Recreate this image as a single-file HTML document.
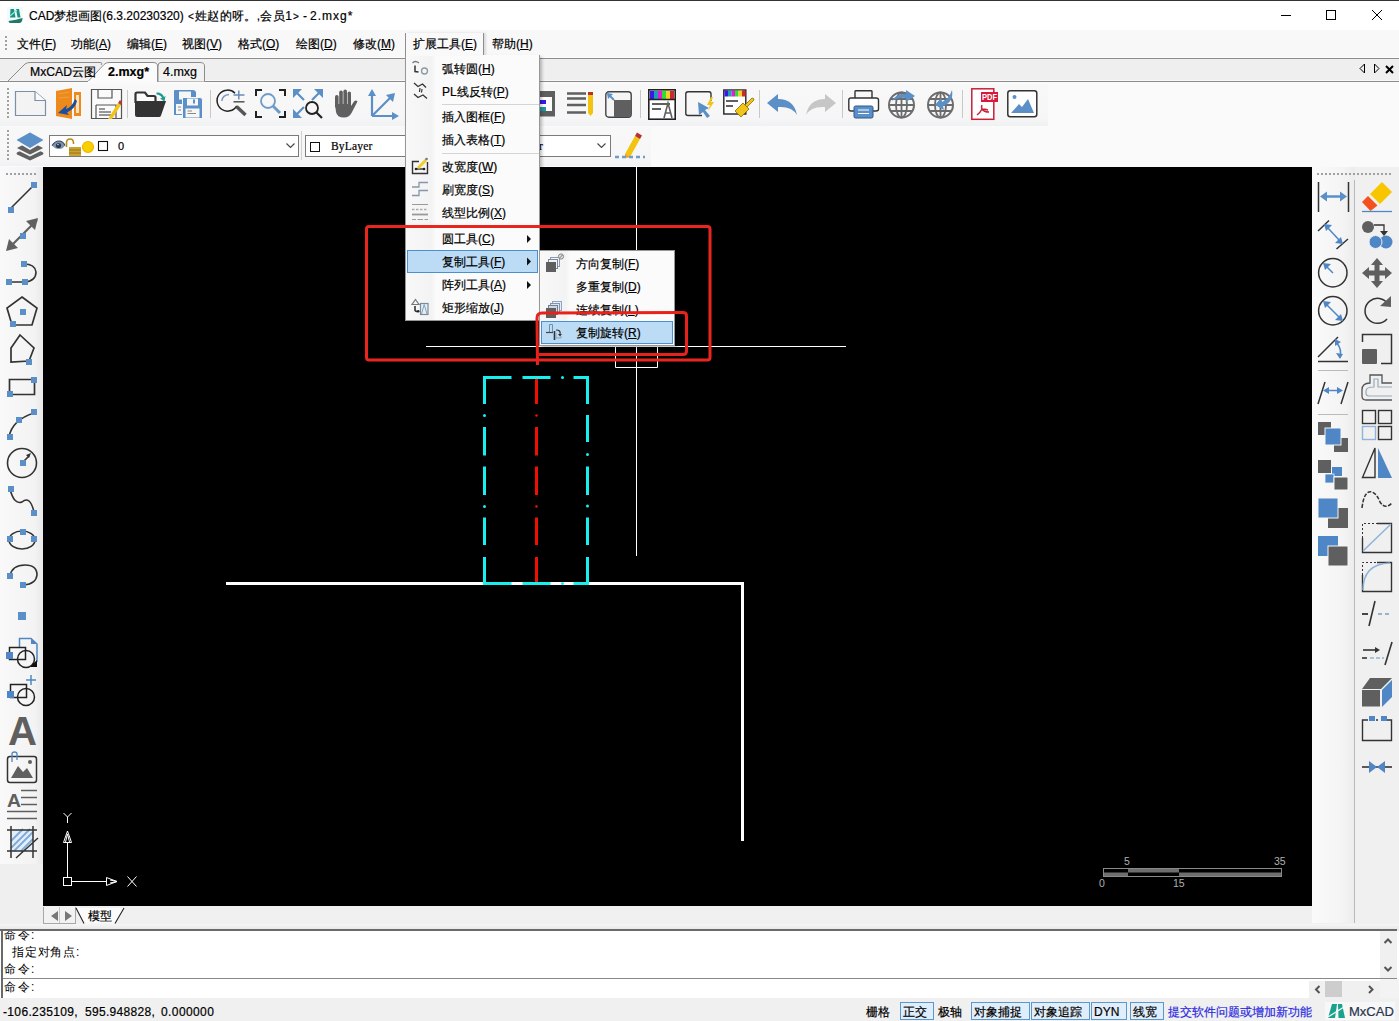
<!DOCTYPE html>
<html><head><meta charset="utf-8">
<style>
*{margin:0;padding:0;box-sizing:border-box}
html,body{width:1399px;height:1021px;overflow:hidden;background:#f0f0f0;font-family:"Liberation Sans",sans-serif;font-size:12px;color:#000}
.a{position:absolute}
.t{position:absolute;white-space:nowrap;line-height:14px;-webkit-text-stroke:0.2px currentColor}
svg{position:absolute;overflow:visible}
.grip{position:absolute;width:2px;background:repeating-linear-gradient(to bottom,#a0a0a0 0,#a0a0a0 2px,transparent 2px,transparent 4px)}
.griph{position:absolute;height:2px;background:repeating-linear-gradient(to right,#a0a0a0 0,#a0a0a0 2px,transparent 2px,transparent 4px)}
.sep{position:absolute;width:1px;background:#c8c8c8}
.mi{position:absolute;white-space:nowrap;line-height:14px;font-size:12px}
</style></head><body>
<!-- top line -->
<div class="a" style="left:0;top:0;width:1399px;height:1px;background:#333"></div>
<!-- title bar -->
<div class="a" style="left:0;top:1px;width:1399px;height:29px;background:#fff"></div>
<svg style="left:0;top:0" width="28" height="28">
<rect x="7" y="7" width="16" height="16" fill="#f2fbfa"/>
<path d="M10.5 9 L14 9 L15.5 17.5 L10 17.5 Z" fill="#1f8f80"/>
<path d="M16 9 L19 9 L20.5 17.5 L17.5 17.5 Z" fill="#1f8f80"/>
<path d="M10 16 L17 10" stroke="#7ff0e0" stroke-width="1.2"/>
<path d="M8.5 21 Q16 20 22.5 18 Q22.5 22 20 23 L9.5 23 Z" fill="#1f7a6c"/>
</svg>
<div class="t" id="t1" style="left:29px;top:9px">CAD梦想画图(6.3.20230320)</div>
<div class="t" id="t2" style="left:188px;top:10px;font-size:10px">&lt;</div>
<div class="t" id="t3" style="left:195px;top:9px;letter-spacing:0.35px">姓赵的呀。,会员1</div>
<div class="t" id="t4" style="left:293px;top:10px;font-size:10px">&gt;</div>
<div class="t" id="t5" style="left:303px;top:9px">-</div>
<div class="t" id="t6" style="left:310px;top:9px;letter-spacing:1px">2.mxg*</div>
<!-- window buttons -->
<div class="a" style="left:1281px;top:15px;width:10px;height:1px;background:#000"></div>
<div class="a" style="left:1326px;top:10px;width:10px;height:10px;border:1px solid #000"></div>
<svg style="left:1372px;top:10px" width="10" height="10"><path d="M0 0 L10 10 M10 0 L0 10" stroke="#000" stroke-width="1"/></svg>

<!-- menu bar -->
<div class="a" style="left:0;top:30px;width:1399px;height:27px;background:#f8f8f8"></div>
<div class="a" style="left:0;top:57px;width:1399px;height:1px;background:#fcfcfc"></div>
<div class="a" style="left:0;top:58px;width:1399px;height:1px;background:#8c8c8c"></div>
<div class="grip" style="left:5px;top:36px;height:16px"></div>
<div class="t" style="left:17px;top:37px">文件(<u>F</u>)</div>
<div class="t" style="left:71px;top:37px">功能(<u>A</u>)</div>
<div class="t" style="left:127px;top:37px">编辑(<u>E</u>)</div>
<div class="t" style="left:182px;top:37px">视图(<u>V</u>)</div>
<div class="t" style="left:238px;top:37px">格式(<u>O</u>)</div>
<div class="t" style="left:296px;top:37px">绘图(<u>D</u>)</div>
<div class="t" style="left:353px;top:37px">修改(<u>M</u>)</div>
<div class="a" style="left:405px;top:33px;width:79px;height:24px;background:#f9f9f9;border:1px solid #8e8e8e;border-bottom:none;box-shadow:2px 0 2px rgba(0,0,0,0.12)"></div>
<div class="t" style="left:413px;top:37px">扩展工具(<u>E</u>)</div>
<div class="t" style="left:492px;top:37px">帮助(<u>H</u>)</div>

<!-- tab strip -->
<div class="a" style="left:0;top:59px;width:1399px;height:22px;background:#efefef"></div>
<div class="a" style="left:0;top:80px;width:1399px;height:1px;background:#f8f8f8"></div>
<div class="a" style="left:0;top:81px;width:1399px;height:1px;background:#8c8c8c"></div>
<svg style="left:0;top:59px" width="220" height="23">
 <path d="M8 22 L25 5 Q27 3.5 30 3.5 L100 3.5 Q103 3.5 101 6 L88 22 Z" fill="#f0f0f0" stroke="none"/>
 <path d="M8 22 L25 5 Q27 3.5 30 3.5 L100 3.5 Q103 3.5 101 6" fill="none" stroke="#8c8c8c"/>
 <path d="M88 22.5 L104 5.5 Q106 3.5 109 3.5 L153 3.5 Q157.5 3.5 157.5 7 L157.5 22.5 Z" fill="#fbfbfb" stroke="#8c8c8c"/>
 <path d="M158 22.5 L158 7 Q158 3.5 161 3.5 L200 3.5 Q204.5 3.5 204.5 7 L204.5 22.5" fill="#f2f2f2" stroke="#8c8c8c"/>
</svg>
<div class="a" style="left:88px;top:81px;width:69px;height:1px;background:#fbfbfb"></div>
<div class="t" style="left:30px;top:65px;font-size:12.2px">MxCAD云图</div>
<div class="t" style="left:108px;top:65px;font-size:12.5px;font-weight:bold">2.mxg*</div>
<div class="t" style="left:163px;top:65px;font-size:12.5px">4.mxg</div>
<svg style="left:1359px;top:63px" width="40" height="12">
 <path d="M5.5 1 L5.5 10 L1 5.5 Z" fill="none" stroke="#000" stroke-width="1"/>
 <path d="M15.5 1 L15.5 10 L20 5.5 Z" fill="none" stroke="#000" stroke-width="1"/>
 <path d="M27 3 L34 10 M34 3 L27 10" stroke="#000" stroke-width="2"/>
</svg>

<!-- toolbar area -->
<div class="a" style="left:0;top:82px;width:1399px;height:85px;background:#fafafa"></div>
<div class="a" style="left:0;top:84px;width:1048px;height:42px;background:linear-gradient(to bottom,#f8f8f8,#f6f6f6 80%,#f0f1f3)"></div>
<div class="a" style="left:0;top:127px;width:651px;height:39px;background:linear-gradient(to bottom,#f8f8f8,#f6f6f6 80%,#f0f1f3)"></div>
<div class="grip" style="left:7px;top:88px;height:31px"></div>
<div class="grip" style="left:7px;top:130px;height:30px"></div>
<!-- toolbar 1 icons -->
<svg style="left:15px;top:91px" width="31" height="25"><path d="M0.5 0.5 L20 0.5 L30.5 9.5 L30.5 24.5 L0.5 24.5 Z" fill="#f3f3f3" stroke="#7b8fa8" stroke-width="1.2"/><path d="M20 0.5 L20 9.5 L30.5 9.5" fill="#fafafa" stroke="#7b8fa8" stroke-width="1.2"/></svg>
<svg style="left:56px;top:88px" width="25" height="32"><path d="M0 3 L16 0 L16 31 L0 28 Z" fill="#ec8a1e"/><path d="M3 6 L13 4 M3 10 L13 9" stroke="#f4a640" stroke-width="0.8"/><rect x="18" y="4" width="7" height="24" fill="#ec8a1e"/><rect x="20" y="7" width="3" height="18" fill="#fbe3c0"/><path d="M19 11 Q16 19 10 21 L11 17 L2 25 L13 27 L11 24.5 Q19 21 21 13 Z" fill="#1b4f9a"/></svg>
<svg style="left:91px;top:89px" width="31" height="30"><path d="M0.5 0.5 L30.5 0.5 L30.5 29.5 L0.5 29.5 Z" fill="#fafafa" stroke="#555" stroke-width="1.2"/><path d="M7 0.5 L7 9 L21 9 L21 0.5" fill="none" stroke="#555" stroke-width="1.2"/><path d="M5 16 L25 16 L25 29.5 M5 16 L5 29.5" fill="none" stroke="#555" stroke-width="1.2"/><path d="M8 20 L14 20 M8 23 L20 23 M8 26 L20 26" stroke="#777" stroke-width="1.5"/><path d="M17 30 L27 14 L30 16 L21 30 Z" fill="#f0c419"/><path d="M27 14 L29 11 L31 13 L30 16 Z" fill="#c0392b"/></svg>
<div class="sep" style="left:127px;top:90px;height:28px"></div>
<svg style="left:134px;top:91px" width="33" height="27"><path d="M1.5 12 L1.5 3 Q1.5 1.5 3 1.5 L11 1.5 L13.5 5 L20 5 Q21.5 5 21.5 6.5 L21.5 10" fill="#fbfbfb" stroke="#333" stroke-width="2.2"/><path d="M1 10 L32 10 Q31.5 12 31 13 L27 24.5 Q26.5 26 25 26 L3 26 Q1 26 1 24 Z" fill="#333"/><path d="M22.5 1.5 Q28 1 30 6 L31.5 5 L30.5 10.5 L26 7.5 L28 7 Q26.5 3.5 22.5 3.5 Z" fill="#1e9a8e"/></svg>
<svg style="left:174px;top:90px" width="29" height="29"><path d="M0 1 Q0 0 1 0 L19 0 Q21 0 22 2 L22 25 L0 25 Z" fill="#5b8fc7"/><rect x="5" y="1.5" width="12" height="8" fill="#f6f6f6"/><rect x="2" y="14" width="6" height="10" fill="#f6f6f6"/><path d="M4 17 L7 17 M4 20 L7 20" stroke="#888" stroke-width="1"/><path d="M8.5 7.5 L26 7.5 Q28.5 7.5 28.5 10 L28.5 28.5 L8.5 28.5 Z" fill="#5b8fc7" stroke="#f6f6f6" stroke-width="1"/><rect x="13" y="8.5" width="11" height="7" fill="#f6f6f6"/><rect x="19" y="9.5" width="2" height="4" fill="#5b8fc7"/><rect x="11.5" y="18.5" width="14" height="9" fill="#f6f6f6"/><path d="M13.5 21 L18 21 M13.5 23.5 L22 23.5" stroke="#888" stroke-width="1"/></svg>
<div class="sep" style="left:210px;top:90px;height:28px"></div>
<svg style="left:212px;top:85px" width="40" height="37"><path d="M23 8.2 A10.5 10.5 0 1 0 24.7 20.8" fill="none" stroke="#222" stroke-width="1.5"/><path d="M24.5 21.5 L33.5 30" stroke="#555" stroke-width="3.5"/><path d="M9.8 16 Q10.5 10 17 9.5" fill="none" stroke="#7a9cc0" stroke-width="1.5"/><path d="M26.8 5.5 V14.5 M21.5 10 H32.5" stroke="#6a8cb8" stroke-width="1.5"/><path d="M21.5 16.8 H32.5" stroke="#555" stroke-width="1.5"/></svg>
<svg style="left:255px;top:89px" width="31" height="29"><path d="M1 7 L1 1 L7 1 M24 1 L30 1 L30 7 M30 22 L30 28 L24 28 M7 28 L1 28 L1 22" fill="none" stroke="#222" stroke-width="2"/><circle cx="13" cy="12" r="7" fill="none" stroke="#6f9bc8" stroke-width="1.8"/><path d="M18 17 L25 24" stroke="#6f9bc8" stroke-width="3"/></svg>
<svg style="left:293px;top:89px" width="31" height="29"><path d="M0 0 L9 0 L0 9 Z M30 0 L21 0 L30 9 Z M0 29 L9 29 L0 20 Z" fill="#5b8fc7"/><path d="M4 4 L11 11 M26 4 L19 11 M4 25 L11 18" stroke="#5b8fc7" stroke-width="2.2"/><circle cx="19" cy="19" r="6" fill="none" stroke="#222" stroke-width="1.8"/><path d="M23 23 L29 29" stroke="#222" stroke-width="2.2"/></svg>
<svg style="left:334px;top:89px" width="24" height="29"><g fill="#606060"><rect x="1" y="6" width="3.6" height="13" rx="1.8"/><rect x="5.2" y="1.5" width="3.6" height="16" rx="1.8"/><rect x="9.4" y="0.5" width="3.6" height="17" rx="1.8"/><rect x="13.6" y="2.5" width="3.4" height="15" rx="1.7"/><path d="M1 15 L17 15 L17 17 L20 12.5 Q22 10.5 23.5 12.5 L17.5 24 Q15 28.5 10 28.5 Q3 28.5 2 23 Z"/></g></svg>
<svg style="left:369px;top:89px" width="30" height="30"><path d="M3 27 L3 4 M3 27 L26 27 M3 27 L23 7" stroke="#5b8fc7" stroke-width="2.2"/><path d="M3 0 L-1 7 L7 7 Z M30 27 L23 23 L23 31 Z M26 4 L17 6 L24 13 Z" fill="#5b8fc7"/></svg>
<!-- after menu -->
<svg style="left:530px;top:91px" width="26" height="26"><rect x="0" y="0" width="25" height="25.5" fill="#5f5f5f"/><rect x="3" y="6" width="19" height="14" fill="#fff"/><rect x="5" y="9" width="11" height="4" fill="#3b18e6"/><rect x="5" y="16" width="11" height="4" fill="#1c9aa0"/></svg>
<svg style="left:567px;top:92px" width="27" height="24"><path d="M0 1.5 L19 1.5 M0 6.5 L19 6.5 M0 13 L19 13 M0 20.5 L19 20.5" stroke="#5f5f5f" stroke-width="2.6"/><path d="M21 1 L26 1 L26 21 L23.5 24 L21 21 Z" fill="#f2c40f"/><rect x="21" y="0" width="5" height="3" fill="#b8322a"/></svg>
<svg style="left:605px;top:91px" width="27" height="27"><rect x="0.8" y="0.8" width="25.4" height="25.4" rx="3" fill="#f5f5f5" stroke="#444" stroke-width="1.4"/><path d="M9 9 L26 9 L26 23 Q26 26 23 26 L9 26 Z" fill="#5f5f5f"/><path d="M3 3 L9 9" stroke="#5b8fc7" stroke-width="1.8"/><path d="M2 2 L8 3 L3 8 Z" fill="#5b8fc7"/></svg>
<div class="sep" style="left:640px;top:90px;height:28px"></div>
<svg style="left:648px;top:89px" width="28" height="31"><rect x="0.8" y="0.8" width="26.4" height="29.4" fill="#fff" stroke="#222" stroke-width="1.6"/><rect x="2" y="2" width="4" height="8" fill="#3b18e6"/><rect x="6" y="2" width="4" height="8" fill="#17a0b8"/><rect x="10" y="2" width="4" height="8" fill="#e61ad8"/><rect x="14" y="2" width="4" height="8" fill="#2ee02e"/><rect x="18" y="2" width="4" height="8" fill="#f4d02a"/><rect x="22" y="2" width="4" height="8" fill="#cf2a2a"/><path d="M1 10.5 L27 10.5" stroke="#222" stroke-width="1.5"/><path d="M4 15 L22 15 M4 20 L13 20" stroke="#5f5f5f" stroke-width="2.2"/><path d="M16 29 L20 14 L24 29 M17.5 24 L22.5 24" fill="none" stroke="#5f5f5f" stroke-width="1.6"/></svg>
<svg style="left:685px;top:91px" width="30" height="27"><path d="M17 24.5 L3 24.5 Q0.8 24.5 0.8 22.5 L0.8 3 Q0.8 0.8 3 0.8 L24 0.8 Q26 0.8 26 3 L26 10" fill="none" stroke="#333" stroke-width="1.4"/><path d="M13 11 L24 17 L20 19 L25 25 L22 27 L18 21 L14 24 Z" fill="#5b8fc7"/><path d="M26 6 L22 14 L25 14 L23 20 L29 11 L26 11 L28 6 Z" fill="#f0c419"/></svg>
<svg style="left:723px;top:89px" width="31" height="30"><rect x="0.8" y="1" width="22" height="24" fill="#fff" stroke="#222" stroke-width="1.4"/><rect x="1.5" y="1.5" width="3.5" height="6" fill="#3b18e6"/><rect x="5" y="1.5" width="3.5" height="6" fill="#17a0b8"/><rect x="8.5" y="1.5" width="3.5" height="6" fill="#e61ad8"/><rect x="12" y="1.5" width="3.5" height="6" fill="#2ee02e"/><rect x="15.5" y="1.5" width="3.5" height="6" fill="#f4d02a"/><rect x="19" y="1.5" width="3.5" height="6" fill="#cf2a2a"/><path d="M3 12 L15 12 M3 17 L10 17" stroke="#5f5f5f" stroke-width="1.8"/><path d="M12 22 L20 14 L26 20 L18 28 Z" fill="#f0c419" stroke="#8a6d00" stroke-width="0.8"/><path d="M22 16 L29 9 Q31 9 31 11 L24 18 Z" fill="#f0c419" stroke="#8a6d00" stroke-width="0.8"/></svg>
<div class="sep" style="left:759px;top:90px;height:28px"></div>
<svg style="left:767px;top:94px" width="31" height="22"><path d="M0 9 L11 0 L11 5 Q27 5 30 21 Q25 12 11 13 L11 18 Z" fill="#5b8fc7"/></svg>
<svg style="left:805px;top:94px" width="31" height="22"><path d="M31 9 L20 0 L20 5 Q4 5 1 21 Q6 12 20 13 L20 18 Z" fill="#c6c6c6"/></svg>
<div class="sep" style="left:842px;top:90px;height:28px"></div>
<svg style="left:848px;top:90px" width="32" height="29"><path d="M7 8 L7 1.5 Q7 0.8 8 0.8 L23 0.8 Q24 0.8 24 1.5 L24 8" fill="none" stroke="#333" stroke-width="1.4"/><path d="M7 21 L3 21 Q0.8 21 0.8 19 L0.8 10 Q0.8 8 3 8 L28 8 Q30.5 8 30.5 10 L30.5 19 Q30.5 21 28 21 L24 21" fill="#fff" stroke="#333" stroke-width="1.4"/><rect x="6" y="16" width="19" height="12" rx="1.5" fill="#5b8fc7" stroke="#2c5a8c" stroke-width="1"/><path d="M10 20 L21 20 M10 23.5 L21 23.5" stroke="#fff" stroke-width="1.2"/></svg>
<svg style="left:888px;top:89px" width="28" height="30"><circle cx="13.5" cy="16" r="12.5" fill="none" stroke="#6c6c6c" stroke-width="2"/><ellipse cx="13.5" cy="16" rx="5.5" ry="12.5" fill="none" stroke="#6c6c6c" stroke-width="1.8"/><path d="M1 16 L26 16 M3 10 L24 10 M3 22 L24 22 M13.5 3.5 L13.5 28.5" stroke="#6c6c6c" stroke-width="1.8"/><path d="M4 12 Q8 4 18 5 L18 1 L27 7 L18 13 L18 9 Q10 8 4 12 Z" fill="#5b8fc7"/></svg>
<svg style="left:927px;top:89px" width="28" height="30"><circle cx="13.5" cy="16" r="12.5" fill="none" stroke="#6c6c6c" stroke-width="2"/><ellipse cx="13.5" cy="16" rx="5.5" ry="12.5" fill="none" stroke="#6c6c6c" stroke-width="1.8"/><path d="M1 16 L26 16 M3 10 L24 10 M3 22 L24 22 M13.5 3.5 L13.5 28.5" stroke="#6c6c6c" stroke-width="1.8"/><path d="M25 1 Q27 13 16 17 L17 21 L8 16 L14 9 L15 13 Q22 10 25 1 Z" fill="#5b8fc7"/></svg>
<div class="sep" style="left:962px;top:90px;height:28px"></div>
<svg style="left:971px;top:88px" width="27" height="33"><rect x="0.8" y="0.8" width="22" height="30.5" fill="#fff" stroke="#c8203a" stroke-width="1.5"/><rect x="10" y="4" width="17" height="10" fill="#d7193a"/><text x="11" y="12" font-family="Liberation Sans" font-size="8.5" font-weight="bold" fill="#fff" textLength="15" lengthAdjust="spacingAndGlyphs">PDF</text><path d="M11 17 Q10 19 11 21 Q13 24 18 24 M11 21 Q9 25 6 27 M11 21 Q14 21 17 22" fill="none" stroke="#c8203a" stroke-width="1.5"/></svg>
<svg style="left:1007px;top:90px" width="31" height="28"><rect x="0.8" y="0.8" width="29" height="26" rx="2.5" fill="#fff" stroke="#333" stroke-width="1.5"/><circle cx="7.5" cy="7" r="2" fill="#5b8fc7"/><path d="M4 23 L12 14 L15 17 L21 9 L27 23 Z" fill="#5b8fc7"/></svg>
<!-- toolbar 2 -->
<svg style="left:15px;top:131px" width="30" height="30"><path d="M15 15 L28 21.5 Q29 22.5 28 23.5 L15 29.5 L2 23.5 Q1 22.5 2 21.5 Z" fill="#606060"/><path d="M15 9.5 L28 16 Q29 17 28 18 L15 24.5 L2 18 Q1 17 2 16 Z" fill="#606060" stroke="#f5f6f7" stroke-width="1.6"/><path d="M15 0.5 L28.5 8 Q29.5 9 28.5 10 L15 18 L1.5 10 Q0.5 9 1.5 8 Z" fill="#5b8fc7" stroke="#f5f6f7" stroke-width="1.6"/></svg>
<div class="a" style="left:49px;top:135px;width:250px;height:22px;background:#fff;border:1px solid #7a7a7a"></div>
<svg style="left:52px;top:138px" width="60" height="18">
 <path d="M0 7.5 Q3 3 7 3 Q11 3 13 7.5 Q11 11 7 11 Q3 11 0 7.5 Z" fill="#7f93ad"/><path d="M0 7.5 Q3 3 7 3 Q11 3 13 7.5" fill="none" stroke="#3a4660" stroke-width="1.2"/><circle cx="6.5" cy="7.5" r="2.6" fill="#2b3a5a"/><circle cx="6" cy="6.5" r="0.8" fill="#ccd"/>
 <path d="M14.5 9 L14.5 5 Q14.5 1 18 1 Q21.5 1 21.5 5 L21.5 6" fill="none" stroke="#b88a1e" stroke-width="1.6"/>
 <rect x="17" y="9" width="12" height="9" fill="#c9a233"/><path d="M17 12 L29 12 M17 15 L29 15" stroke="#8a6a10" stroke-width="0.8"/>
 <circle cx="36" cy="9" r="5.5" fill="#f7d000" stroke="#f3b400" stroke-width="1.2"/>
 <rect x="46.5" y="3.5" width="9" height="9" fill="#fff" stroke="#111" stroke-width="1.1"/>
</svg>
<div class="t" style="left:118px;top:139px;font-size:11px">0</div>
<svg style="left:286px;top:143px" width="10" height="6"><path d="M0.5 0.5 L4.5 4.5 L8.5 0.5" fill="none" stroke="#444" stroke-width="1.1"/></svg>
<div class="sep" style="left:301px;top:131px;height:29px;background:#d0d0d0"></div>
<div class="a" style="left:305px;top:135px;width:103px;height:22px;background:#fff;border:1px solid #7a7a7a"></div>
<div class="a" style="left:310px;top:142px;width:10px;height:10px;border:1px solid #111"></div>
<div class="t" style="left:331px;top:139px;font-family:'Liberation Serif',serif;font-size:11.5px;letter-spacing:0.2px;-webkit-text-stroke:0.2px #000">ByLayer</div>
<div class="a" style="left:412px;top:135px;width:199px;height:22px;background:#fff;border:1px solid #7a7a7a"></div>
<div class="t" style="left:539px;top:139px;font-family:'Liberation Serif',serif;font-size:11.5px;-webkit-text-stroke:0.2px #000">r</div>
<svg style="left:597px;top:143px" width="10" height="6"><path d="M0.5 0.5 L4.5 4.5 L8.5 0.5" fill="none" stroke="#444" stroke-width="1.1"/></svg>
<svg style="left:615px;top:132px" width="31" height="27"><path d="M10 22 L20 4 L25 7 L15 25 L10 26 Z" fill="#f2c40f"/><path d="M20 4 L22 0.5 L27 3.5 L25 7 Z" fill="#b8322a"/><path d="M10 22 L15 25 L10 26 Z" fill="#e8a13a"/><path d="M0 25 L30 25" stroke="#6f9bc8" stroke-width="2.5" stroke-dasharray="4 3"/></svg>
<!-- drawing area -->
<div class="a" style="left:43px;top:167px;width:1269px;height:739px;background:#000"></div>
<svg style="left:0;top:0" width="1399" height="1021">
 <!-- crosshair -->
 <path d="M426 346.5 L846 346.5 M636.5 167 L636.5 556 M615.5 325.5 L657.5 325.5 L657.5 367.5 L615.5 367.5 Z" stroke="#fff" stroke-width="1" fill="none"/>
 <!-- white L line -->
 <path d="M226 583.5 L742.5 583.5 L742.5 841" stroke="#fff" stroke-width="3" fill="none"/>
 <!-- cyan rect -->
 <g stroke="#16f0f0" stroke-width="3" fill="none" stroke-linecap="butt">
  <path d="M484.5 404 L484.5 377.5 L511.5 377.5 M522.5 377.5 L550.5 377.5 M573.5 377.5 L587.5 377.5 L587.5 404 M484.5 427 L484.5 455.5 M484.5 466.5 L484.5 495 M484.5 517.5 L484.5 545 M484.5 557 L484.5 583.5 L511.5 583.5 M522.5 583.5 L550.5 583.5 M573.5 583.5 L587.5 583.5 L587.5 557 M587.5 415 L587.5 442 M587.5 466.5 L587.5 495 M587.5 517.5 L587.5 545"/>
 </g>
 <g fill="#16f0f0"><circle cx="484.5" cy="415.5" r="1.5"/><circle cx="484.5" cy="506.5" r="1.5"/><circle cx="562.5" cy="377.5" r="1.5"/><circle cx="587.5" cy="454.5" r="1.5"/><circle cx="587.5" cy="506" r="1.5"/><circle cx="562.5" cy="583.5" r="1.5"/></g>
 <g stroke="#f01000" stroke-width="3" fill="none">
  <path d="M536.5 379 L536.5 404 M536.5 427 L536.5 455.5 M536.5 466.5 L536.5 495 M536.5 517.5 L536.5 545 M536.5 557 L536.5 582"/>
 </g>
 <g fill="#f01000"><circle cx="536.5" cy="415.5" r="1.3"/><circle cx="536.5" cy="506.5" r="1.3"/></g>
 <!-- UCS -->
 <g stroke="#fff" stroke-width="1" fill="none">
  <path d="M63.5 813 L67.5 817 L71.5 813 M67.5 817 L67.5 823"/>
  <path d="M67.5 831 L63.5 842.5 L71.5 842.5 Z M67.5 834 L65.5 842 M67.5 834 L69.5 842"/>
  <path d="M67.5 842.5 L67.5 877"/>
  <rect x="63.5" y="877.5" width="8" height="8"/>
  <path d="M71.5 881.5 L106 881.5"/>
  <path d="M117 881.5 L106.5 877.5 L106.5 885.5 Z M110 880 L117 881.5 L110 883"/>
  <path d="M127.5 876.5 L136.5 886.5 M136.5 876.5 L127.5 886.5"/>
 </g>
 <!-- scale bar -->
 <g>
  <rect x="1103.5" y="868.5" width="178" height="8" fill="#000" stroke="#8a8a8a" stroke-width="1"/>
  <rect x="1128" y="869" width="51" height="3.5" fill="#6e6e6e"/>
  <rect x="1104" y="872.5" width="24" height="3.5" fill="#6e6e6e"/>
  <rect x="1179" y="872.5" width="102" height="3.5" fill="#6e6e6e"/>
 </g>
 <g font-family="Liberation Sans" font-size="10.5" fill="#b0b0b0">
  <text x="1124" y="864.5">5</text><text x="1274" y="864.5">35</text><text x="1099" y="887">0</text><text x="1173" y="887">15</text>
 </g>
</svg>
<!-- left toolbar -->
<div class="a" style="left:0;top:167px;width:43px;height:697px;background:linear-gradient(to right,#f9f9f9,#f3f3f3 80%,#e9e9e9)"></div>
<div class="griph" style="left:6px;top:173px;width:32px"></div>
<svg style="left:0;top:0" width="45" height="870">
 <g fill="none" stroke="#333" stroke-width="1.6">
  <path d="M11 208 L34 185"/>
  <path d="M22 297 L37 308 L32 325 L12 325 L7 308 Z" stroke-width="1.7"/>
  <path d="M20 335 L34 348 L29 361 L11 362 L11 348 Z" stroke-width="1.7"/>
  <path d="M9.5 379.5 L34.5 379.5 L34.5 394.5 L9.5 394.5 Z" stroke-width="1.7"/>
  <path d="M9 437 Q12 420 34 413"/>
  <circle cx="22" cy="463" r="14.5"/>
  <path d="M10 489 Q14 505 22 502 Q30 495 34 512"/>
  <ellipse cx="22" cy="540" rx="13" ry="9"/>
  <path d="M10 576 Q12 565 25 565 Q37 565 37 575 Q36 584 24 585"/>
  <path d="M9 521" />
 </g>
 <path d="M8 249 L37 220" stroke="#606060" stroke-width="2.2"/>
 <path d="M6 251 L9 239 L18 248 Z M38 218 L35 230 L26 221 Z" fill="#606060"/>
 <path d="M22 463 L29 456" stroke="#333" stroke-width="1.6"/><path d="M31 453 L26 455 L29 458 Z" fill="#333"/>
 <path d="M9 282 L25 282 Q36 281 36 272 Q35 264 24 264" fill="none" stroke="#333" stroke-width="1.6"/>
 <g fill="#5b8fc7">
  <rect x="31" y="182" width="6" height="6"/><rect x="8" y="207" width="6" height="6"/>
  <rect x="20" y="233" width="6" height="6"/>
  <rect x="21" y="261" width="6" height="6"/><rect x="6" y="279" width="6" height="6"/><rect x="22" y="279" width="6" height="6"/>
  <rect x="20" y="309" width="6" height="6"/><rect x="10" y="321" width="6" height="6"/>
  <rect x="26" y="359" width="6" height="6"/>
  <rect x="31" y="377" width="6" height="6"/><rect x="7" y="391" width="6" height="6"/>
  <rect x="31" y="409" width="6" height="6"/><rect x="16" y="417" width="6" height="6"/><rect x="7" y="434" width="6" height="6"/>
  <rect x="20" y="460" width="6" height="6"/>
  <rect x="8" y="486" width="6" height="6"/><rect x="31" y="510" width="6" height="6"/>
  <rect x="7" y="536" width="6" height="6"/><rect x="20" y="529" width="6" height="6"/><rect x="31" y="536" width="6" height="6"/>
  <rect x="7" y="573" width="6" height="6"/><rect x="20" y="582" width="6" height="6"/>
  <rect x="18" y="612" width="8" height="8"/>
 </g>
 <!-- block insert -->
 <path d="M19.5 648 L19.5 638.5 L31 638.5 L37 644 L37 662" fill="none" stroke="#4f86c6" stroke-width="1.5"/>
 <path d="M31 638.5 L31 644 L37 644 Z" fill="#4f86c6"/>
 <rect x="9.5" y="647.5" width="16" height="12" fill="none" stroke="#222" stroke-width="1.5"/>
 <circle cx="26" cy="659" r="8.5" fill="none" stroke="#222" stroke-width="1.5"/>
 <rect x="6" y="652" width="7" height="7" fill="#4f86c6"/>
 <path d="M30 667 L37 660 L37 667 Z" fill="#111"/>
 <!-- make block -->
 <rect x="10.5" y="684.5" width="16" height="13" fill="none" stroke="#222" stroke-width="1.5"/>
 <circle cx="26" cy="697" r="8.5" fill="none" stroke="#222" stroke-width="1.5"/>
 <rect x="7" y="691" width="7" height="7" fill="#4f86c6"/>
 <path d="M31 675 L31 685 M26 680 L36 680" stroke="#4f86c6" stroke-width="1.5"/>
 <!-- A -->
 <text x="8" y="745" font-family="Liberation Sans" font-weight="bold" font-size="40" fill="#5f5f5f" textLength="29" lengthAdjust="spacingAndGlyphs">A</text>
 <!-- image -->
 <rect x="7.5" y="756.5" width="29" height="26" rx="2.5" fill="none" stroke="#333" stroke-width="1.5"/>
 <path d="M12 762 L12 754 Q12 752 14.5 752 Q17 752 17 754 L17 760" fill="none" stroke="#4f86c6" stroke-width="1.3"/>
 <path d="M11 778 L18 766 L23 772 L27 768 L33 778 Z" fill="#5f5f5f"/>
 <circle cx="30" cy="762" r="2" fill="#5f5f5f"/>
 <!-- mtext -->
 <text x="7" y="806.5" font-family="Liberation Sans" font-weight="bold" font-size="19" fill="#5f5f5f" textLength="14" lengthAdjust="spacingAndGlyphs">A</text>
 <path d="M21 790.5 L37 790.5 M21 797.5 L37 797.5 M21 804.5 L37 804.5 M7 811.5 L37 811.5 M7 818.5 L37 818.5" stroke="#5f5f5f" stroke-width="1.6"/>
 <!-- hatch -->
 <path d="M11 829 L33 829 L33 851 L11 851 Z" fill="#e3eef8"/>
 <path d="M11 841 L23 829 M11 848 L30 829 M14 851 L33 832 M21 851 L33 839" stroke="#7faad8" stroke-width="1.8"/>
 <path d="M7 830 L37 830 M7 851 L37 851 M11 826 L11 858 M33 826 L33 858 M16 858 L38 838" stroke="#333" stroke-width="1.5"/>
</svg>
<!-- left toolbar lower bg -->
<!-- right toolbar -->
<div class="a" style="left:1312px;top:167px;width:43px;height:756px;background:linear-gradient(to right,#fafafa,#f4f4f4 70%,#ececec)"></div>
<div class="a" style="left:1355px;top:167px;width:44px;height:756px;background:#f0f0f0"></div>
<div class="a" style="left:1354px;top:180px;width:1px;height:743px;background:#b8b8b8"></div>
<div class="griph" style="left:1317px;top:173px;width:76px"></div>
<svg style="left:0;top:0" width="1399" height="923">
 <!-- col1 -->
 <path d="M1318.5 182 L1318.5 212 M1348.5 182 L1348.5 212" stroke="#333" stroke-width="1.5"/>
 <path d="M1324 196.5 L1343 196.5" stroke="#5b8fc7" stroke-width="2.5"/><path d="M1320 196.5 L1327 191.5 L1327 201.5 Z M1347 196.5 L1340 191.5 L1340 201.5 Z" fill="#5b8fc7"/>
 <path d="M1318 231 L1329 220.5 M1336.5 249 L1348 239" stroke="#333" stroke-width="1.5"/>
 <path d="M1327 227 L1340 241" stroke="#4f86c6" stroke-width="1.5"/><path d="M1324 224 L1332 225 L1326 231 Z M1343 244 L1335 243 L1341 237 Z" fill="#4f86c6"/>
 <circle cx="1332.8" cy="272.7" r="14.2" fill="none" stroke="#333" stroke-width="1.5"/>
 <path d="M1333 273 L1326 266" stroke="#4f86c6" stroke-width="1.5"/><path d="M1323 263 L1331 264 L1325 270 Z" fill="#4f86c6"/>
 <circle cx="1332.8" cy="310.8" r="14.2" fill="none" stroke="#333" stroke-width="1.5"/>
 <path d="M1326 304 L1340 318" stroke="#4f86c6" stroke-width="1.5"/><path d="M1323 301 L1331 302 L1325 308 Z M1343 321 L1335 320 L1341 314 Z" fill="#4f86c6"/>
 <path d="M1318 357 L1338 337 M1318 361.5 L1348 361.5" stroke="#333" stroke-width="1.5"/>
 <path d="M1337 343 Q1342 350 1340 356" fill="none" stroke="#4f86c6" stroke-width="1.5"/><path d="M1335 339 L1341 342 L1335 346 Z M1340 359 L1336 353 L1343 354 Z" fill="#4f86c6"/>
 <path d="M1318 370.5 L1348 370.5 M1318 414.5 L1348 414.5" stroke="#bbb" stroke-width="1"/>
 <path d="M1318 404 L1325 382 M1341 404 L1348 382" stroke="#333" stroke-width="1.5"/>
 <path d="M1326 390.5 L1340 390.5" stroke="#4f86c6" stroke-width="1.5"/><path d="M1323 390.5 L1329 387 L1329 394 Z M1343 390.5 L1337 387 L1337 394 Z" fill="#4f86c6"/>
 <rect x="1318" y="422" width="13" height="13" fill="#5f5f5f"/><rect x="1334" y="438" width="14" height="14" fill="#5f5f5f"/><rect x="1325" y="428" width="16" height="17" fill="#4f86c6" stroke="#f5f5f5" stroke-width="1"/>
 <rect x="1318" y="460" width="13" height="13" fill="#5f5f5f"/><rect x="1332" y="467" width="10" height="9" fill="#4f86c6"/><rect x="1325" y="474" width="9" height="9" fill="#4f86c6" stroke="#f5f5f5" stroke-width="0.8"/><rect x="1334" y="477" width="14" height="13" fill="#5f5f5f" stroke="#f5f5f5" stroke-width="1"/>
 <rect x="1328" y="508" width="20" height="20" fill="#5f5f5f"/><rect x="1318" y="498" width="20" height="20" fill="#4f86c6" stroke="#f5f5f5" stroke-width="1"/>
 <rect x="1318" y="536" width="20" height="20" fill="#4f86c6"/><rect x="1328" y="546" width="20" height="20" fill="#5f5f5f" stroke="#f5f5f5" stroke-width="1"/>
 <!-- col2 -->
 <path d="M1382 182 L1392 192 L1380 204 L1370 194 Z" fill="#f7c600"/>
 <path d="M1368 196 L1377.5 205.5 L1370.5 211 L1362 202 Z" fill="#f4511e"/>
<path d="M1362 211.5 L1392 211.5" stroke="#4f86c6" stroke-width="1.3"/>
 <circle cx="1368" cy="227" r="6" fill="#5f5f5f"/>
 <path d="M1374 225 L1384 225 L1384 232" fill="none" stroke="#333" stroke-width="1.3"/><path d="M1380 231 L1388 231 L1384 236 Z" fill="#333"/>
 <circle cx="1386" cy="242" r="6.5" fill="#4f86c6"/><circle cx="1375.5" cy="242" r="6.5" fill="#4f86c6" stroke="#f0f0f0" stroke-width="1"/>
 <path d="M1377 258 L1383 265 L1379.5 265 L1379.5 270.5 L1385 270.5 L1385 267 L1392 273 L1385 279 L1385 275.5 L1379.5 275.5 L1379.5 281 L1383 281 L1377 288 L1371 281 L1374.5 281 L1374.5 275.5 L1369 275.5 L1369 279 L1362 273 L1369 267 L1369 270.5 L1374.5 270.5 L1374.5 265 L1371 265 Z" fill="#5f5f5f"/>
 <path d="M1388 304 A 12.5 12.5 0 1 0 1387 319" fill="none" stroke="#333" stroke-width="1.5"/><path d="M1391 296 L1391 307 L1380 306 Z" fill="#5f5f5f"/>
 <path d="M1362.5 342 L1362.5 334.5 L1391.5 334.5 L1391.5 363.5 L1381 363.5" fill="none" stroke="#333" stroke-width="1.5"/><rect x="1362" y="349" width="15" height="15" rx="1" fill="#5f5f5f"/>
 <path d="M1392 383 L1382 383 L1382 375 L1370 375 L1370 383 Q1362 383 1362 390 L1362 396 Q1362 400 1366 400 L1392 400" fill="none" stroke="#555" stroke-width="1.3"/>
 <path d="M1392 387 L1378 387 L1378 379 L1374 379 L1374 387 Q1366 387 1366 391 L1366 393 Q1366 396 1369 396 L1392 396" fill="none" stroke="#9ab" stroke-width="1.2"/>
 <rect x="1362.5" y="410.5" width="13" height="13" fill="none" stroke="#333" stroke-width="1.4"/><rect x="1378.5" y="410.5" width="13" height="13" fill="none" stroke="#333" stroke-width="1.4"/><rect x="1362.5" y="426.5" width="13" height="13" fill="none" stroke="#8fb3d9" stroke-width="1.4"/><rect x="1378.5" y="426.5" width="13" height="13" fill="none" stroke="#333" stroke-width="1.4"/>
 <path d="M1375 448 L1375 477.5 L1362.5 477.5 Z" fill="none" stroke="#333" stroke-width="1.4"/><path d="M1378 448 L1392 478 L1378 478 Z" fill="#4f86c6"/>
 <path d="M1362 508 Q1364 490 1372 492 Q1377 494 1380 502 Q1385 510 1392 503" fill="none" stroke="#333" stroke-width="1.5" stroke-dasharray="4 1.5"/>
 <path d="M1362.5 538 L1362.5 523.5 L1377 523.5" fill="none" stroke="#333" stroke-width="1" stroke-dasharray="2 2"/>
 <path d="M1362.5 538 L1362.5 552.5 L1391.5 552.5 L1391.5 523.5 L1377 523.5" fill="none" stroke="#333" stroke-width="1.4"/>
 <path d="M1363 551 L1391 524" stroke="#8fb3d9" stroke-width="1.5"/>
 <path d="M1362.5 575 L1362.5 562.5 L1377 562.5" fill="none" stroke="#333" stroke-width="1" stroke-dasharray="2 2"/>
 <path d="M1362.5 575 L1362.5 591.5 L1391.5 591.5 L1391.5 562.5 L1377 562.5" fill="none" stroke="#333" stroke-width="1.4"/>
 <path d="M1363 590 Q1363 564 1390 563" fill="none" stroke="#8fb3d9" stroke-width="1.5"/>
 <path d="M1362 614 L1368 614" stroke="#333" stroke-width="1.8"/><path d="M1378 614 L1392 614" stroke="#9ab3c8" stroke-width="1.8" stroke-dasharray="4 3"/><path d="M1369 626 L1375 601" stroke="#333" stroke-width="1.6"/>
 <path d="M1363 650 L1376 650" stroke="#333" stroke-width="1.6"/><path d="M1380 650 L1375 647 L1375 653 Z" fill="#333"/>
 <path d="M1362 658 L1367 658" stroke="#333" stroke-width="1.6"/><path d="M1370 658 L1384 658" stroke="#9ab3c8" stroke-width="1.6" stroke-dasharray="4 2"/><path d="M1385 665 L1392 642" stroke="#333" stroke-width="1.6"/>
 <path d="M1362 689 L1370 678 L1392 678 L1381 689 Z" fill="#5f5f5f"/><rect x="1362" y="690" width="18" height="16.5" fill="#5f5f5f"/><path d="M1382 690 L1392 680 L1392 697 L1382 707 Z" fill="#4f86c6"/>
 <path d="M1368 720 L1362.5 720 L1362.5 740.5 L1391.5 740.5 L1391.5 720 L1386 720 M1376 720 L1378 720" fill="none" stroke="#333" stroke-width="1.4"/>
 <rect x="1369" y="716" width="6" height="5" fill="#4f86c6"/><rect x="1381" y="716" width="6" height="5" fill="#4f86c6"/>
 <path d="M1362 767 L1392 767" stroke="#333" stroke-width="1.6"/><path d="M1369 761 L1377 767 L1369 773 Z M1385 761 L1377 767 L1385 773 Z" fill="#4f86c6"/>
</svg>
<!-- model tab bar -->
<div class="a" style="left:0;top:864px;width:43px;height:59px;background:#efefef"></div>
<div class="a" style="left:43px;top:906px;width:1269px;height:17px;background:#f0f0f0"></div>
<div class="a" style="left:43px;top:907px;width:33px;height:17px;background:#f2f2f2;border:1px solid #a8a8a8;border-top:none"></div>
<div class="a" style="left:59px;top:907px;width:1px;height:16px;background:#c8c8c8"></div>
<svg style="left:0;top:900px" width="140" height="30">
 <path d="M58 11 L51 16 L58 21 Z M65 11 L72 16 L65 21 Z" fill="#777"/>
 <path d="M76 8 L84 23.5 L115 23.5 L124 8 Z" fill="#fbfbfb"/><path d="M76 8 L84 23.5 M115 23.5 L124 8" fill="none" stroke="#222" stroke-width="1.1"/>
</svg>
<div class="t" style="left:88px;top:909px">模型</div>
<!-- command area -->
<div class="a" style="left:0;top:924px;width:1399px;height:6px;background:linear-gradient(to bottom,#f6f6f6,#e6e6e6)"></div>
<div class="a" style="left:0;top:929px;width:1397px;height:2px;background:#6a6a6a"></div>
<div class="a" style="left:0;top:931px;width:1399px;height:68px;background:#fff"></div>
<div class="a" style="left:1px;top:930px;width:2px;height:68px;background:#6a6a6a"></div>
<div class="a" style="left:3px;top:978px;width:1394px;height:1px;background:#888"></div>
<div class="a" style="left:1380px;top:931px;width:17px;height:47px;background:#f0f0f0"></div>
<svg style="left:1380px;top:931px" width="17" height="47"><path d="M4.5 12 L8 8.5 L11.5 12" fill="none" stroke="#555" stroke-width="2"/><path d="M4.5 36 L8 39.5 L11.5 36" fill="none" stroke="#555" stroke-width="2"/></svg>
<div class="a" style="left:1380px;top:979px;width:19px;height:20px;background:#f3f3f3"></div>
<div class="a" style="left:1309px;top:981px;width:71px;height:17px;background:#f0f0f0"></div>
<div class="a" style="left:1325px;top:981px;width:17px;height:16px;background:#cdcdcd"></div>
<svg style="left:1309px;top:981px" width="71" height="17"><path d="M10.5 5 L7 8.5 L10.5 12" fill="none" stroke="#555" stroke-width="2"/><path d="M60 5 L63.5 8.5 L60 12" fill="none" stroke="#555" stroke-width="2"/></svg>
<div class="t" style="left:4px;top:931px;height:12px;overflow:hidden;line-height:14px;letter-spacing:1.5px;-webkit-text-stroke:0"><span style="position:relative;top:-3px">命令:</span></div>
<div class="t" style="left:12px;top:945px;letter-spacing:0.8px;-webkit-text-stroke:0">指定对角点:</div>
<div class="t" style="left:4px;top:962px;letter-spacing:1.5px;-webkit-text-stroke:0">命令:</div>
<div class="t" style="left:4px;top:980px;letter-spacing:1.5px;-webkit-text-stroke:0">命令:</div>
<!-- status bar -->
<div class="a" style="left:0;top:998px;width:1399px;height:23px;background:#f0f0f0"></div>
<div class="t" id="c1" style="left:3px;top:1005px;letter-spacing:0.35px">-106.235109,</div>
<div class="t" id="c2" style="left:85px;top:1005px;letter-spacing:0.3px">595.948828,</div>
<div class="t" id="c3" style="left:161px;top:1005px;letter-spacing:0.4px">0.000000</div>
<div class="t" style="left:866px;top:1005px">栅格</div>
<div class="a" style="left:900px;top:1002px;width:34px;height:18px;background:#e0eefb;border:1px solid #5a98d0"></div>
<div class="t" style="left:903px;top:1005px">正交</div>
<div class="t" style="left:938px;top:1005px">极轴</div>
<div class="a" style="left:971px;top:1002px;width:59px;height:18px;background:#e0eefb;border:1px solid #5a98d0"></div>
<div class="t" style="left:974px;top:1005px">对象捕捉</div>
<div class="a" style="left:1031px;top:1002px;width:59px;height:18px;background:#e0eefb;border:1px solid #5a98d0"></div>
<div class="t" style="left:1034px;top:1005px">对象追踪</div>
<div class="a" style="left:1091px;top:1002px;width:36px;height:18px;background:#e0eefb;border:1px solid #5a98d0"></div>
<div class="t" style="left:1094px;top:1005px">DYN</div>
<div class="a" style="left:1130px;top:1002px;width:34px;height:18px;background:#e0eefb;border:1px solid #5a98d0"></div>
<div class="t" style="left:1133px;top:1005px">线宽</div>
<div class="t" style="left:1168px;top:1005px;color:#2c2ce0">提交软件问题或增加新功能</div>
<div class="a" style="left:1325px;top:1002px;width:70px;height:18px;background:#f7f7f7"></div>
<svg style="left:1327px;top:1003px" width="19" height="16"><path d="M5 1 L10 1 L8 15 L1 15 Z" fill="#17a38c"/><path d="M11 1 L15 1 L18 15 L11.5 15 Z" fill="#17a38c"/><path d="M1 14 L17 4" stroke="#f7f7f7" stroke-width="1.4"/></svg>
<div class="t" style="left:1349px;top:1005px;font-size:13px;color:#28334d">MxCAD</div>
<!-- dropdown menu -->
<div class="a" style="left:405px;top:55px;width:135px;height:266px;background:#fbfbfb;border:1px solid #979797;border-top:none;box-shadow:2px 2px 3px rgba(0,0,0,0.25)"></div>
<div class="a" style="left:406px;top:55px;width:30px;height:265px;background:linear-gradient(to right,#f8f8f8,#f3f3f3 85%,#fbfbfb)"></div>
<div class="a" style="left:406px;top:33px;width:77px;height:23px;background:#f9f9f9"></div>
<div class="t" style="left:413px;top:37px">扩展工具(<u>E</u>)</div>
<div class="a" style="left:442px;top:104px;width:97px;height:1px;background:#d5d5d5"></div>
<div class="a" style="left:442px;top:153px;width:97px;height:1px;background:#d5d5d5"></div>
<div class="a" style="left:407px;top:250px;width:131px;height:23px;background:#bcdcf6;border:1px solid #4a90d0"></div>
<div class="t" style="left:442px;top:62px">弧转圆(<u>H</u>)</div>
<div class="t" style="left:442px;top:85px">PL线反转(<u>P</u>)</div>
<div class="t" style="left:442px;top:110px">插入图框(<u>F</u>)</div>
<div class="t" style="left:442px;top:133px">插入表格(<u>T</u>)</div>
<div class="t" style="left:442px;top:160px">改宽度(<u>W</u>)</div>
<div class="t" style="left:442px;top:183px">刷宽度(<u>S</u>)</div>
<div class="t" style="left:442px;top:206px">线型比例(<u>X</u>)</div>
<div class="t" style="left:442px;top:232px">圆工具(<u>C</u>)</div>
<div class="t" style="left:442px;top:255px">复制工具(<u>F</u>)</div>
<div class="t" style="left:442px;top:278px">阵列工具(<u>A</u>)</div>
<div class="t" style="left:442px;top:301px">矩形缩放(<u>J</u>)</div>
<svg style="left:0;top:0" width="700" height="400">
 <path d="M527 235 L531 239 L527 243 Z M527 257.5 L531 261.5 L527 265.5 Z M527 281 L531 285 L527 289 Z" fill="#111"/>
 <!-- icons -->
 <g fill="none" stroke="#666" stroke-width="1.2">
  <path d="M412.5 63 Q415 60 419 63" stroke="#777"/><path d="M415 65.5 L415 71.5 L418.5 72" stroke="#333" stroke-width="1.5"/>
  <circle cx="424.5" cy="71" r="3" stroke="#8a98a8" stroke-width="1.3"/>
  <path d="M414 83 L418 86.5 L422.5 84 L426 87.5 M414 94 L418 97.5 L423 95 L427 98.5" stroke="#333" stroke-width="1.3"/>
  <path d="M420 88 L419.5 92 M422 89 L421.5 92.5" stroke="#333" stroke-width="1.2"/>
  <path d="M419 161.5 L412.5 161.5 L412.5 173.5 L427.5 173.5 L427.5 162" stroke="#333" stroke-width="1.4"/>
  <path d="M416 169 L424 169" stroke="#222" stroke-width="1.3"/>
  <path d="M412 187 L419 187 L419 182.5 L428 182.5 M412 195.5 L419 195.5 L419 190.5 L428 190.5" stroke="#8896a8" stroke-width="1.3"/>
  <path d="M412 204.5 L428 204.5" stroke="#999" stroke-width="1"/>
  <path d="M412 209.5 L428 209.5" stroke="#aaa" stroke-width="1.6" stroke-dasharray="2.5 1.5"/>
  <path d="M412 214.5 L428 214.5" stroke="#999" stroke-width="1.8"/>
  <path d="M412 219.5 L416 219.5 M417.5 219.5 L423 219.5 M424.5 219.5 L428 219.5" stroke="#999" stroke-width="1"/>
  <path d="M415.5 299.5 L419 304.5 L412 304.5 Z" stroke="#777" stroke-width="1.2"/>
  <path d="M415 306 L415 310 Q415 311.5 418 311.5" stroke="#333" stroke-width="1.6"/>
  <rect x="420.5" y="303.5" width="7.5" height="11" fill="#e2f0fb" stroke="#7d8a98" stroke-width="1.2"/><path d="M421.5 314 L424.2 304.5 L427 314" stroke="#8aa0b4" stroke-width="1"/>
 </g>
 <path d="M417 167 L425 159 L427 161 L419 169 Z" fill="#f2cc2a"/><circle cx="426.5" cy="159" r="1.3" fill="#777"/><circle cx="416" cy="169" r="1.3" fill="#222"/><circle cx="424" cy="169" r="1.3" fill="#222"/>
 <circle cx="418.3" cy="311.3" r="1.2" fill="#222"/>
</svg>
<!-- submenu -->
<div class="a" style="left:539px;top:250px;width:136px;height:96px;background:#fbfbfb;border:1px solid #979797;box-shadow:2px 2px 3px rgba(0,0,0,0.25)"></div>
<div class="a" style="left:540px;top:251px;width:30px;height:94px;background:linear-gradient(to right,#f8f8f8,#f3f3f3 85%,#fbfbfb)"></div>
<div class="a" style="left:541px;top:321px;width:132px;height:23px;background:#bcdcf6;border:1px solid #4a90d0"></div>
<div class="t" style="left:576px;top:257px">方向复制(<u>F</u>)</div>
<div class="t" style="left:576px;top:280px">多重复制(<u>D</u>)</div>
<div class="t" style="left:576px;top:303px">连续复制(<u>L</u>)</div>
<div class="t" style="left:576px;top:326px">复制旋转(<u>R</u>)</div>
<svg style="left:0;top:0" width="700" height="400">
 <rect x="550.5" y="257.5" width="9" height="9" fill="none" stroke="#8a9bb0" stroke-width="1"/><rect x="548.5" y="259.5" width="9" height="9" fill="#f4f4f4" stroke="#7a8898" stroke-width="1"/><rect x="546" y="262" width="10" height="10" fill="#5f5f5f"/>
 <circle cx="561" cy="256.5" r="2.6" fill="#ddd" stroke="#888" stroke-width="1"/><path d="M559.5 258 L562.5 255" stroke="#666" stroke-width="0.8"/>
 <rect x="552.5" y="301.5" width="9" height="9" fill="#e8eef5" stroke="#8fa5c0" stroke-width="1"/><rect x="550.5" y="303.5" width="9" height="9" fill="#dde5ee" stroke="#7f95b0" stroke-width="1"/><rect x="548.5" y="305.5" width="9" height="9" fill="#cfd8e2" stroke="#6f8098" stroke-width="1"/><rect x="546" y="308" width="10" height="10" fill="#5f5f5f"/>
 <path d="M549.5 333 L549.5 324.5 L552.5 324.5 L552.5 333" fill="none" stroke="#6f8fb0" stroke-width="1"/>
 <path d="M546 332.5 L553 332.5" stroke="#444" stroke-width="1.2"/><path d="M554.5 331 L554.5 340" stroke="#333" stroke-width="1.6"/>
 <path d="M556 330 Q561 330 560 334" fill="none" stroke="#333" stroke-width="1.2"/><path d="M558 334 L562 334 L560 336.5 Z" fill="#333"/>
 <path d="M556 333 L556 338 L561 338 L561 336" fill="none" stroke="#8aa0b8" stroke-width="1"/>
</svg>
<!-- red annotations -->
<svg style="left:0;top:0" width="800" height="400">
 <rect x="366.5" y="226.5" width="343.5" height="133.5" rx="2.5" fill="none" stroke="#e8261e" stroke-width="3"/>
 <path d="M537.5 365 L537 318 Q537 313 542 313 L683 312.5 Q686.5 312.5 686.5 316 L686.5 351 Q686.5 354.5 683 354.5 L539 354.5" fill="none" stroke="#e8221a" stroke-width="3"/>
</svg>
</body></html>
